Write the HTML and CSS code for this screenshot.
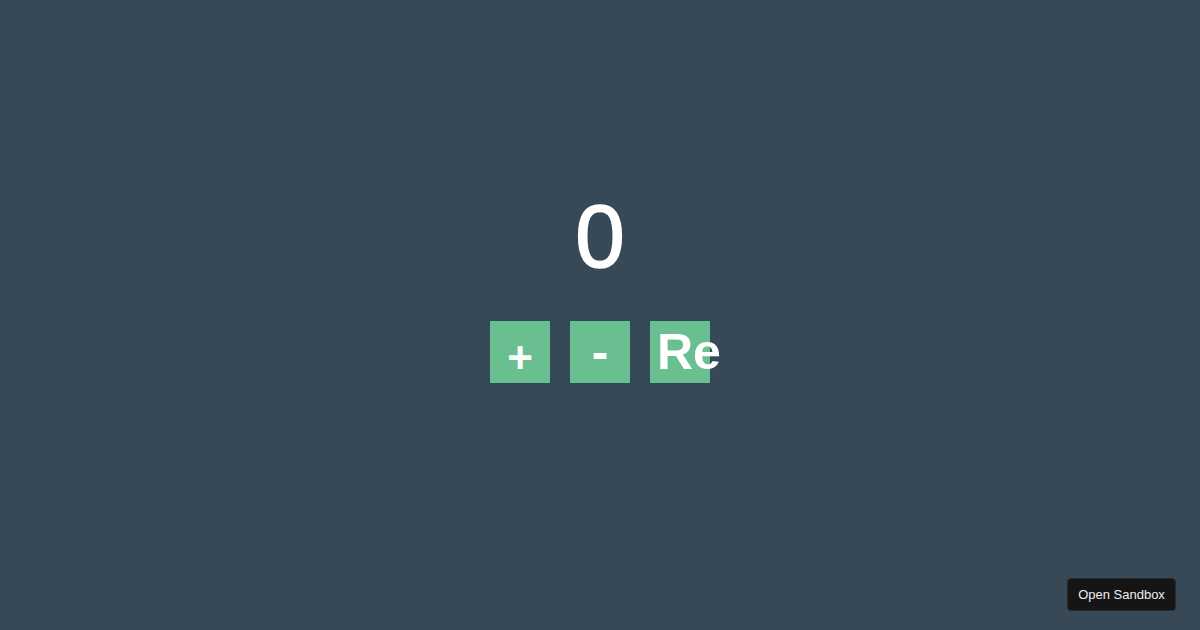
FILE: index.html
```html
<!DOCTYPE html>
<html>
<head>
<meta charset="utf-8">
<link rel="stylesheet" href="styles.css">
</head>
<body>
<main class="app">
  <div class="count">0</div>
  <div class="controls">
    <button class="btn"><span class="plus">+</span></button>
    <button class="btn">-</button>
    <button class="btn">Re</button>
  </div>
</main>
<a class="sandbox">Open Sandbox</a>
</body>
</html>
```
FILE: styles.css
```css
html, body {
  margin: 0;
  height: 100%;
}
body {
  background: #374956;
  font-family: "Liberation Sans", Arial, sans-serif;
  color: #fff;
}
.app {
  display: flex;
  flex-direction: column;
  align-items: center;
  padding-top: 185px;
}
.count {
  font-size: 89px;
  line-height: 103px;
  -webkit-text-stroke: 1.6px #fff;
}
.controls {
  display: flex;
  gap: 20px;
  margin-top: 33px;
}
.btn {
  width: 60px;
  height: 62px;
  padding: 0 7px;
  box-sizing: border-box;
  border: none;
  background: #6abf91;
  color: #fff;
  font-family: "Liberation Sans", Arial, sans-serif;
  font-weight: bold;
  font-size: 50px;
  text-align: center;
  overflow: visible;
  white-space: nowrap;
}
.plus {
  font-size: 44px;
  vertical-align: -5px;
}
.sandbox {
  position: fixed;
  right: 24px;
  bottom: 19px;
  width: 109px;
  height: 33px;
  box-sizing: border-box;
  display: flex;
  align-items: center;
  justify-content: center;
  background: #151515;
  border: 1px solid #2a2a2a;
  border-radius: 4px;
  color: #eee;
  font-size: 13px;
}
```
